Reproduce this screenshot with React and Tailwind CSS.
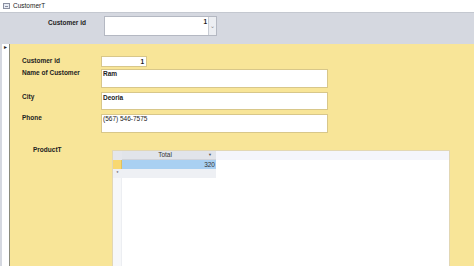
import React from "react";

export default function App() {
  const font = { fontFamily: '"Liberation Sans", Arial, sans-serif' };
  return (
    <div className="w-[474px] h-[266px] overflow-hidden flex flex-col bg-white text-[#222]" style={font}>
      {/* title tab */}
      <div className="h-[12px] flex items-center gap-[3px] pl-[3px] bg-white shrink-0">
        <div className="w-[7px] h-[6px] border border-[#8a8fa0] bg-[#e8ecf4] flex flex-col justify-center gap-[1px] px-[1px]">
          <div className="h-px bg-[#8a8fa0]" />
        </div>
        <span className="text-[6.5px] text-[#222]">CustomerT</span>
      </div>
      {/* header band */}
      <div className="h-[32px] shrink-0 bg-[#d5d8e0] border-t border-[#c4c8d0] flex items-start">
        <span className="ml-[48px] mt-[5px] w-[56px] text-[6.5px] font-bold">Customer id</span>
        <div className="mt-[3px] w-[113px] h-[20px] flex border border-[#b4b8c2] bg-white">
          <div className="flex-1 text-right pr-[1px] text-[6.5px] font-bold leading-[9px]">1</div>
          <div className="w-[8px] bg-[#eceef2] border-l border-[#c8ccd4] flex items-center justify-center text-[6px] text-[#888]">⌄</div>
        </div>
      </div>
      {/* detail */}
      <div className="flex-1 flex min-h-0">
        <div className="w-[10px] shrink-0 flex">
          <div className="w-[2px] bg-[#d5d8e0]" />
          <div className="flex-1 bg-white relative">
            <span className="absolute left-[2px] top-[0px] text-[6px] leading-[7px]">▸</span>
          </div>
          <div className="w-[1px] bg-[#8a8a7a]" />
        </div>
        <div className="flex-1 bg-[#f8e598] flex flex-col pt-[12px]">
          <div className="flex flex-col text-[6.5px] font-bold">
            <div className="flex h-[11px]">
              <span className="w-[91px] pl-[12px] leading-[9px]">Customer id</span>
              <div className="w-[46px] h-[11px] bg-white border border-[#d8c78a] text-right pr-[2px] leading-[9px]">1</div>
            </div>
            <div className="flex h-[19px] mt-[2px]">
              <span className="w-[91px] pl-[12px] leading-[8px]">Name of Customer</span>
              <div className="w-[227px] h-[19px] bg-white border border-[#d8c78a] pl-[1px] leading-[8px]">Ram</div>
            </div>
            <div className="flex h-[18px] mt-[4px]">
              <span className="w-[91px] pl-[12px] leading-[9px]">City</span>
              <div className="w-[227px] h-[18px] bg-white border border-[#d8c78a] pl-[1px] leading-[9px]">Deoria</div>
            </div>
            <div className="flex h-[19px] mt-[4px]">
              <span className="w-[91px] pl-[12px] leading-[8px]">Phone</span>
              <div className="w-[227px] h-[19px] bg-white border border-[#d8c78a] pl-[1px] leading-[8px] font-normal">(567) 546-7575</div>
            </div>
          </div>
          <div className="flex-1 flex mt-[17px] min-h-0">
            <span className="w-[102px] pl-[23px] text-[6.5px] font-bold leading-[7px] -mt-[4px]">ProductT</span>
            <div className="w-[338px] flex-1 max-w-[338px] bg-white border-t border-l border-r border-[#e2d7b4] flex flex-col text-[6.5px]">
              <div className="flex h-[9px] bg-[#f4f5fb]">
                <div className="w-[9px] bg-[#e4e6ec]" />
                <div className="w-[94px] bg-[#e1e4ea] border-b border-[#d0d3da] flex items-center">
                  <span className="flex-1 text-center leading-[8px] text-[#333]">Total</span>
                  <span className="w-[8px] text-[4px] text-[#555]">▼</span>
                </div>
              </div>
              <div className="flex h-[9px]">
                <div className="w-[9px] bg-[#f8d871] border-r border-[#e0c060]" />
                <div className="w-[94px] bg-[#a9d0f2] text-right pr-[1px] leading-[9px] text-[#333]">320</div>
              </div>
              <div className="flex h-[9px]">
                <div className="w-[9px] bg-[#eef0f4] text-[5px] leading-[9px] text-center text-[#444]">*</div>
                <div className="w-[94px] bg-[#eef0f4]" />
              </div>
              <div className="flex-1 flex">
                <div className="w-[9px] bg-[#f6f7f9] border-r border-[#eceef2]" />
                <div className="flex-1 bg-white" />
              </div>
            </div>
          </div>
        </div>
      </div>
    </div>
  );
}
